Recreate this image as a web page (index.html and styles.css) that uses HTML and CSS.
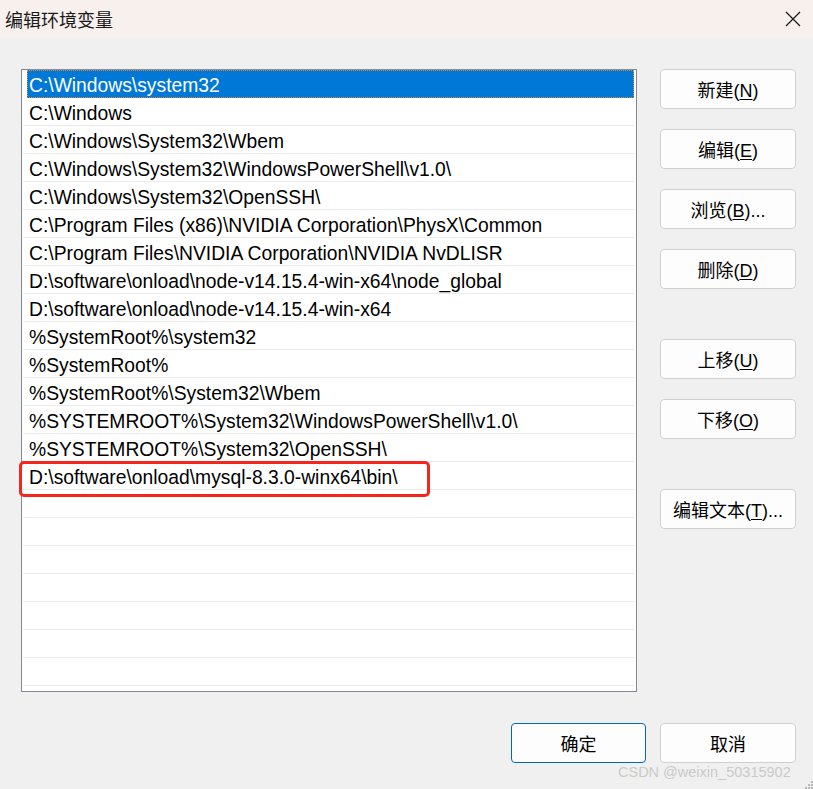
FILE: index.html
```html
<!DOCTYPE html>
<html lang="zh-CN">
<head>
    <meta charset="utf-8">
    <title>编辑环境变量</title>
    <link rel="stylesheet" href="styles.css">
</head>
<body>
    <div class="titlebar">
        <p class="title">编辑环境变量</p>
        <svg class="close" width="16" height="16" viewBox="0 0 16 16">
            <path d="M1 1 L15 15 M15 1 L1 15" stroke="#1a1a1a" stroke-width="1.3" fill="none"/>
        </svg>
    </div>

    <div class="main">
        <div class="list">
            <div class="row sel">C:\Windows\system32</div>
            <div class="row">C:\Windows</div>
            <div class="row">C:\Windows\System32\Wbem</div>
            <div class="row">C:\Windows\System32\WindowsPowerShell\v1.0\</div>
            <div class="row">C:\Windows\System32\OpenSSH\</div>
            <div class="row">C:\Program Files (x86)\NVIDIA Corporation\PhysX\Common</div>
            <div class="row">C:\Program Files\NVIDIA Corporation\NVIDIA NvDLISR</div>
            <div class="row">D:\software\onload\node-v14.15.4-win-x64\node_global</div>
            <div class="row">D:\software\onload\node-v14.15.4-win-x64</div>
            <div class="row">%SystemRoot%\system32</div>
            <div class="row">%SystemRoot%</div>
            <div class="row">%SystemRoot%\System32\Wbem</div>
            <div class="row">%SYSTEMROOT%\System32\WindowsPowerShell\v1.0\</div>
            <div class="row">%SYSTEMROOT%\System32\OpenSSH\</div>
            <div class="row">D:\software\onload\mysql-8.3.0-winx64\bin\</div>
            <div class="row"></div>
            <div class="row"></div>
            <div class="row"></div>
            <div class="row"></div>
            <div class="row"></div>
            <div class="row"></div>
            <div class="row"></div>
            <div class="row"></div>
        </div>

        <div class="side">
            <button class="btn">新建(<u>N</u>)</button>
            <button class="btn">编辑(<u>E</u>)</button>
            <button class="btn">浏览(<u>B</u>)...</button>
            <button class="btn">删除(<u>D</u>)</button>
            <button class="btn gap-top">上移(<u>U</u>)</button>
            <button class="btn">下移(<u>O</u>)</button>
            <button class="btn gap-top">编辑文本(<u>T</u>)...</button>
        </div>
    </div>

    <div class="footer">
        <button class="btn primary">确定</button>
        <button class="btn">取消</button>
    </div>

    <div class="highlight"></div>
    <p class="watermark">CSDN @weixin_50315902</p>
    <svg class="grip" width="10" height="10" viewBox="0 0 10 10">
        <rect x="8" y="2" width="2" height="2" fill="#b8b8b8"/>
        <rect x="5" y="5" width="2" height="2" fill="#b8b8b8"/>
        <rect x="8" y="5" width="2" height="2" fill="#b8b8b8"/>
        <rect x="2" y="8" width="2" height="2" fill="#b8b8b8"/>
        <rect x="5" y="8" width="2" height="2" fill="#b8b8b8"/>
        <rect x="8" y="8" width="2" height="2" fill="#b8b8b8"/>
    </svg>
</body>
</html>
```

FILE: styles.css
```css
p{
    margin: 0;
}
body{
    margin: 0;
    width: 813px;
    height: 789px;
    background-color: #f0f0f0;
    font-family: "Liberation Sans", "Noto Sans CJK SC", sans-serif;
    color: #000;
    position: relative;
    overflow: hidden;
}
.titlebar{
    height: 38px;
    background-color: #f7f0ed;
    display: flex;
    align-items: center;
    justify-content: space-between;
    padding-left: 5px;
    padding-right: 12px;
}
.title{
    font-size: 18px;
    color: #1a1a1a;
}
.main{
    display: flex;
    padding-top: 31px;
    padding-left: 21px;
    column-gap: 23px;
}
.list{
    width: 612px;
    height: 621px;
    background-color: #fff;
    border: 1px solid #858891;
    padding-left: 1px;
    padding-right: 1px;
    overflow: hidden;
}
.row{
    height: 25px;
    padding-top: 2px;
    border-bottom: 1px solid #ececec;
    font-size: 19.3px;
    line-height: 28px;
    padding-left: 6px;
    white-space: nowrap;
}
.row.sel{
    margin-left: 4px;
    margin-right: 1px;
    padding-left: 2px;
    height: 26px;
    border-bottom: none;
    background-color: #0078d7;
    color: #fff;
    outline: 1px dotted #e0903a;
    outline-offset: -1px;
}
.side{
    display: flex;
    flex-direction: column;
    row-gap: 20px;
}
.btn{
    width: 136px;
    height: 40px;
    background-color: #fdfdfd;
    border: 1px solid #d0d0d0;
    border-radius: 4px;
    font-family: "Liberation Sans", "Noto Sans CJK SC", sans-serif;
    font-size: 18px;
    color: #000;
    padding: 0;
}
.btn u{
    text-underline-offset: 2px;
}
.gap-top{
    margin-top: 30px;
}
.footer{
    display: flex;
    justify-content: flex-end;
    column-gap: 14px;
    padding-top: 31px;
    padding-right: 17px;
}
.btn.primary{
    width: 135px;
    border-color: #0067c0;
}
.highlight{
    position: absolute;
    left: 19px;
    top: 461px;
    width: 405px;
    height: 30px;
    border: 3px solid #f5261c;
    border-radius: 5px;
}
.watermark{
    position: absolute;
    left: 618px;
    top: 764px;
    font-size: 14.5px;
    color: #cacaca;
    font-family: "Liberation Sans", sans-serif;
}
.grip{
    position: absolute;
    right: 0;
    bottom: 0;
}
```
